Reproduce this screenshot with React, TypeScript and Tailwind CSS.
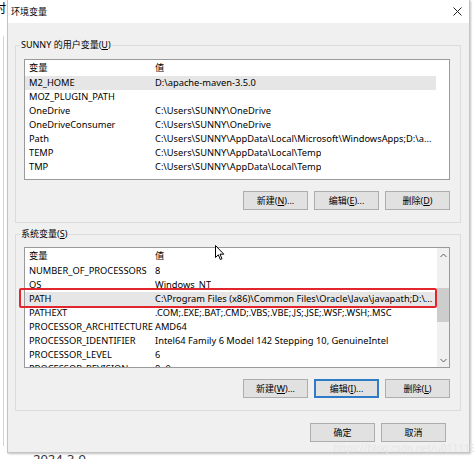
import type { ReactNode } from 'react';

const userVars: [string, string][] = [
  ['M2_HOME', 'D:\\apache-maven-3.5.0'],
  ['MOZ_PLUGIN_PATH', ''],
  ['OneDrive', 'C:\\Users\\SUNNY\\OneDrive'],
  ['OneDriveConsumer', 'C:\\Users\\SUNNY\\OneDrive'],
  ['Path', 'C:\\Users\\SUNNY\\AppData\\Local\\Microsoft\\WindowsApps;D:\\a...'],
  ['TEMP', 'C:\\Users\\SUNNY\\AppData\\Local\\Temp'],
  ['TMP', 'C:\\Users\\SUNNY\\AppData\\Local\\Temp'],
];

const sysVars: [string, string][] = [
  ['NUMBER_OF_PROCESSORS', '8'],
  ['OS', 'Windows_NT'],
  ['PATH', 'C:\\Program Files (x86)\\Common Files\\Oracle\\Java\\javapath;D:\\...'],
  ['PATHEXT', '.COM;.EXE;.BAT;.CMD;.VBS;.VBE;.JS;.JSE;.WSF;.WSH;.MSC'],
  ['PROCESSOR_ARCHITECTURE', 'AMD64'],
  ['PROCESSOR_IDENTIFIER', 'Intel64 Family 6 Model 142 Stepping 10, GenuineIntel'],
  ['PROCESSOR_LEVEL', '6'],
  ['PROCESSOR_REVISION', '8e0a'],
];

function Button({ children, focused }: { children: ReactNode; focused?: boolean }) {
  return (
    <div
      className={
        focused
          ? 'w-[65px] h-[19px] flex items-center justify-center border-2 border-[#2f7bc6] bg-[#e1e1e1] text-[9px]'
          : 'w-[65px] h-[19px] flex items-center justify-center border border-[#adadad] bg-[#e1e1e1] text-[9px]'
      }
    >
      {children}
    </div>
  );
}

function Row({ name, value, selected }: { name: string; value: string; selected?: boolean }) {
  return (
    <div className={selected ? 'flex h-[14px] items-center bg-[#e6e6e6]' : 'flex h-[14px] items-center'}>
      <div className="w-[126px] shrink-0 pl-[4px] whitespace-nowrap">{name}</div>
      <div className="pl-[4px] whitespace-nowrap overflow-hidden">{value}</div>
    </div>
  );
}

function Header() {
  return (
    <div className="flex h-[16px] items-center">
      <div className="w-[126px] shrink-0 pl-[4px]">变量</div>
      <div className="pl-[4px]">值</div>
    </div>
  );
}

function Chevron({ up }: { up?: boolean }) {
  return (
    <svg width="7" height="5" viewBox="0 0 7 5">
      <path d={up ? 'M0.5 4 L3.5 1 L6.5 4' : 'M0.5 1 L3.5 4 L6.5 1'} fill="none" stroke="#606060" strokeWidth="1" />
    </svg>
  );
}

export default function App() {
  return (
    <div
      className="relative w-[474px] h-[459px] overflow-hidden bg-white text-black"
      style={{ fontFamily: '"Noto Sans", "Noto Sans CJK SC", sans-serif' }}
    >
      <div className="flex">
        {/* background window behind the dialog */}
        <div className="w-[7px] shrink-0 overflow-hidden">
          <div className="ml-[-6px] mt-[2px] text-[12px] leading-[14px]">村</div>
          <div className="mt-[20px] ml-[3px] h-[410px] border-l border-[#d4d4d4]" />
        </div>

        <div className="w-[463px] shrink-0 border-x border-b border-[#c4c4c4] shadow-[1px_1px_2px_rgba(0,0,0,0.25)] text-[9px]">
          <div className="h-[23px] bg-white flex items-center justify-between pl-[3px] pr-[7px]">
            <span className="text-[9px]">环境变量</span>
            <svg width="9" height="9" viewBox="0 0 9 9">
              <path d="M0.5 0.5 L8.5 8.5 M8.5 0.5 L0.5 8.5" stroke="#222" strokeWidth="1" />
            </svg>
          </div>

          <div className="bg-[#f0f0f0] flex flex-col pb-[10px]">
            <fieldset className="mt-[15px] ml-[7px] mr-[8px] border border-[#dcdcdc] pb-[12px]">
              <legend className="ml-[4px] px-[1px] leading-[14px]">
                SUNNY 的用户变量(<u>U</u>)
              </legend>
              <div className="mt-[7px] ml-[8px] mr-[10px] h-[121px] border border-[#9a9a9a] bg-white overflow-hidden text-[9.3px]">
                <Header />
                <div className="w-[411px]">
                  {userVars.map(([n, v], i) => (
                    <Row key={n} name={n} value={v} selected={i === 0} />
                  ))}
                </div>
              </div>
              <div className="mt-[11px] mr-[10px] flex justify-end gap-[6px]">
                <Button>新建(<u>N</u>)...</Button>
                <Button>编辑(<u>E</u>)...</Button>
                <Button>删除(<u>D</u>)</Button>
              </div>
            </fieldset>

            <fieldset className="mt-[4px] ml-[7px] mr-[8px] border border-[#dcdcdc] pb-[12px]">
              <legend className="ml-[4px] px-[1px] leading-[14px]">
                系统变量(<u>S</u>)
              </legend>
              <div className="mt-[6px] ml-[8px] mr-[10px] h-[121px] border border-[#9a9a9a] bg-white overflow-hidden flex text-[9.3px]">
                <div className="flex-1 min-w-0">
                  <Header />
                  {sysVars.map(([n, v]) => (
                    <Row key={n} name={n} value={v} selected={n === 'PATH'} />
                  ))}
                </div>
                <div className="w-[12px] shrink-0 bg-[#f0f0f0] flex flex-col items-center">
                  <div className="h-[14px] flex items-center justify-center">
                    <Chevron up />
                  </div>
                  <div className="mt-[26px] h-[34px] w-full bg-[#cdcdcd]" />
                  <div className="flex-1" />
                  <div className="h-[14px] flex items-center justify-center">
                    <Chevron />
                  </div>
                </div>
              </div>
              <div className="mt-[11px] mr-[10px] flex justify-end gap-[6px]">
                <Button>新建(<u>W</u>)...</Button>
                <Button focused>编辑(<u>I</u>)...</Button>
                <Button>删除(<u>L</u>)</Button>
              </div>
            </fieldset>

            <div className="mt-[12px] pr-[23px] flex justify-end gap-[6px]">
              <Button>确定</Button>
              <Button>取消</Button>
            </div>
          </div>
        </div>
      </div>

      <div className="pl-[33px] mt-[-2px] text-[13px] leading-[16px] text-[#333]">2024-3-9</div>

      {/* red annotation box around PATH */}
      <div className="absolute left-[19px] top-[288px] w-[418px] h-[20px] border-2 border-[#e3262d] rounded-[2px]" />

      {/* mouse pointer */}
      <svg className="absolute left-[215px] top-[245px]" width="10" height="16" viewBox="0 0 10 16">
        <path d="M0.5 0.5 L0.5 12.5 L3.3 9.8 L5.3 14.5 L7 13.8 L5 9.2 L8.8 9.2 Z" fill="#fff" stroke="#000" strokeWidth="1" />
      </svg>

      {/* watermark */}
      <div className="absolute left-[333px] top-[442px] text-[10px] leading-[12px] text-[#e6e6e6] whitespace-nowrap">
        https://blog.csdn.net/u011115024
      </div>
    </div>
  );
}
